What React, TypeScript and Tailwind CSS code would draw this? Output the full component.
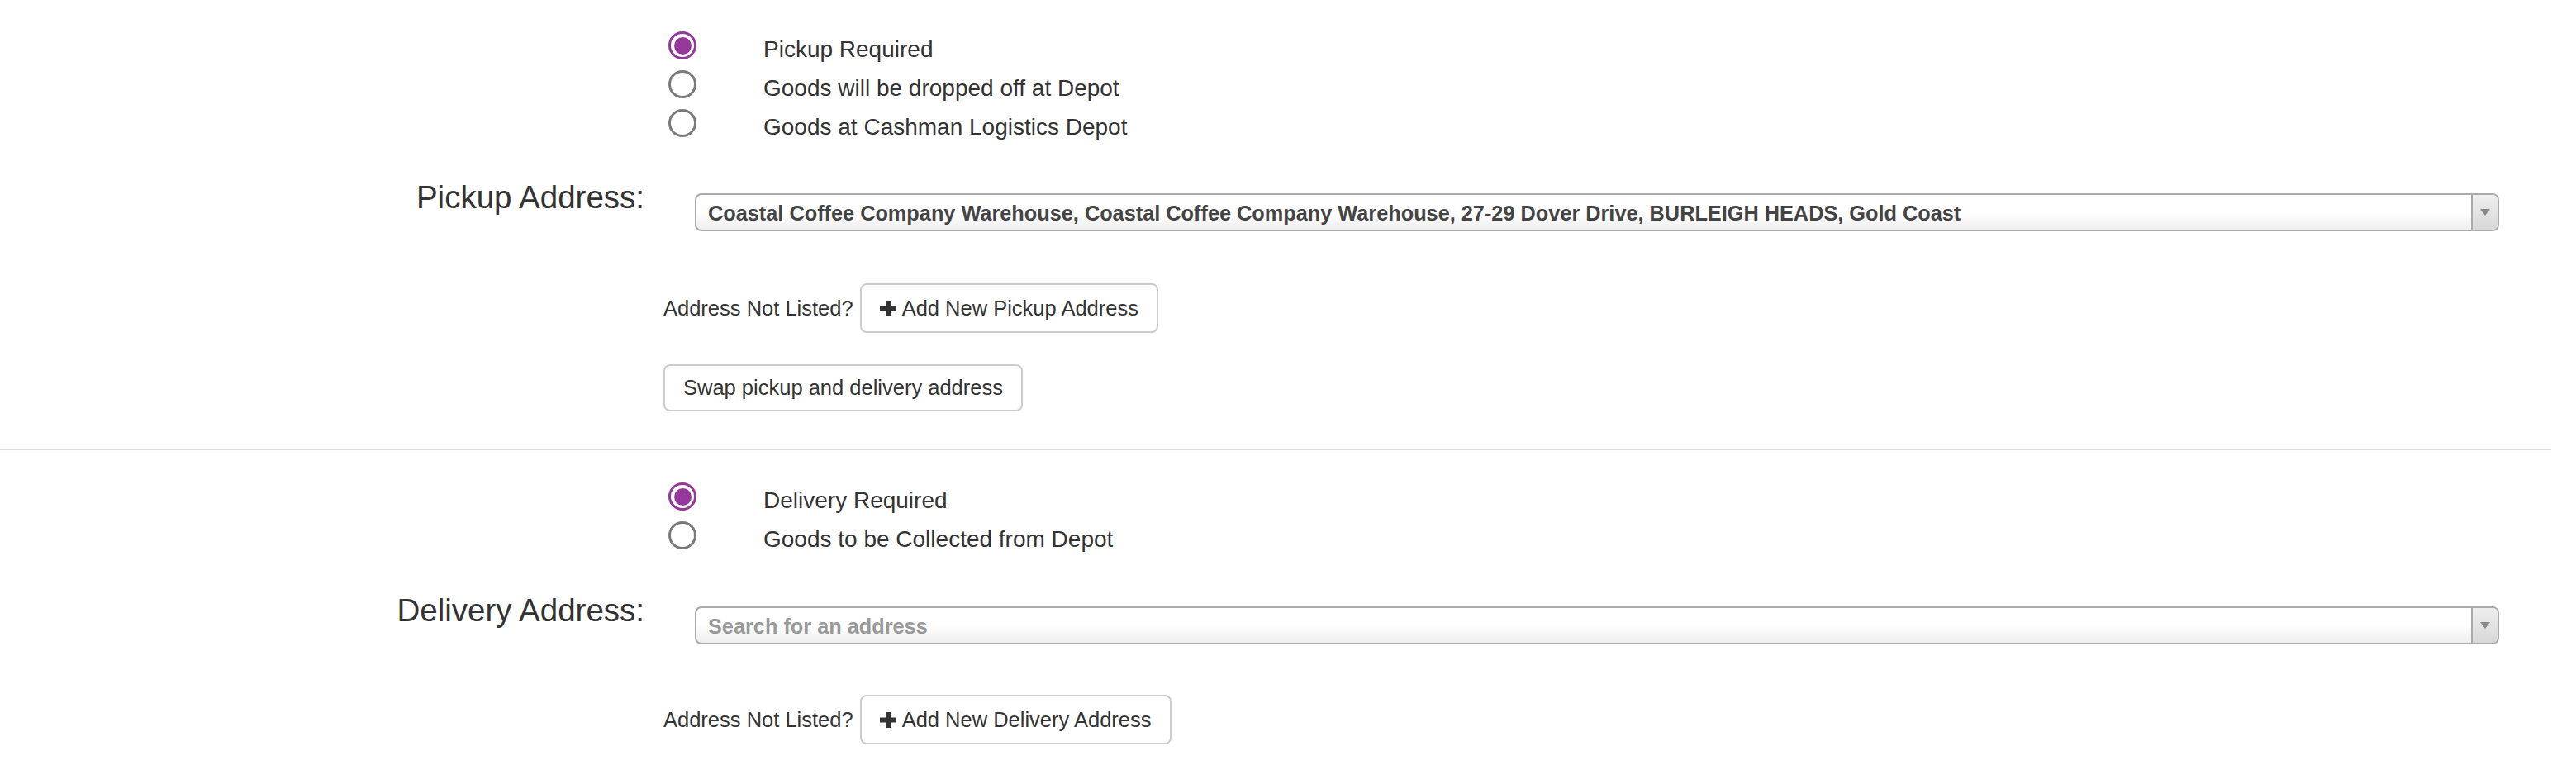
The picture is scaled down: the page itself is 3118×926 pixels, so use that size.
import React from "react";

function Radio({ checked }: { checked?: boolean }) {
  if (checked) {
    return (
      <div className="w-[34px] h-[34px] rounded-full border-[3.5px] border-[#94399a] flex items-center justify-center shrink-0 bg-white">
        <div className="w-[21px] h-[21px] rounded-full bg-[#94399a]" />
      </div>
    );
  }
  return <div className="w-[34px] h-[34px] rounded-full border-[3px] border-[#7a7a7a] shrink-0 bg-white" />;
}

function RadioRow({ label, checked }: { label: string; checked?: boolean }) {
  return (
    <div className="h-[47px] flex items-start">
      <div className="mt-[7px]">
        <Radio checked={checked} />
      </div>
      <div className="ml-[81px] mt-[13px] text-[28px] leading-[32px] text-[#333] whitespace-nowrap">{label}</div>
    </div>
  );
}

function Select({ value, placeholder }: { value?: string; placeholder?: string }) {
  return (
    <div className="mt-[16px] ml-[61px] w-[2184px] h-[46px] flex border-2 border-[#aaa] rounded-[8px] overflow-hidden bg-gradient-to-b from-white from-50% to-[#eeeeee]">
      <div
        className={
          "flex-1 flex items-center pl-[14px] pt-[3px] text-[25.3px] font-bold whitespace-nowrap " +
          (value ? "text-[#444]" : "text-[#999]")
        }
      >
        {value ?? placeholder}
      </div>
      <div className="w-[32px] border-l-2 border-[#aaa] bg-gradient-to-b from-[#eeeeee] to-[#d8d8d8] flex items-center justify-center">
        <svg width="12" height="8" viewBox="0 0 12 8">
          <polygon points="0,0 12,0 6,8" fill="#888" />
        </svg>
      </div>
    </div>
  );
}

function PlusIcon() {
  return (
    <svg width="20" height="19" viewBox="0 0 20 19" className="shrink-0">
      <rect x="0" y="6.5" width="20" height="6" fill="#333" />
      <rect x="7" y="0" width="6" height="19" fill="#333" />
    </svg>
  );
}

function Btn({ children, className }: { children: React.ReactNode; className?: string }) {
  return (
    <div
      className={
        "flex items-center border-2 border-[#cccccc] rounded-[8px] bg-white px-[22px] text-[25.5px] text-[#333] whitespace-nowrap " +
        (className ?? "")
      }
    >
      {children}
    </div>
  );
}

function LabelRow({ label, value, placeholder }: { label: string; value?: string; placeholder?: string }) {
  return (
    <div className="flex items-start">
      <div className="w-[780px] text-right text-[38.5px] leading-[41px] text-[#333] whitespace-nowrap">{label}</div>
      <Select value={value} placeholder={placeholder} />
    </div>
  );
}

function AddRow({ text }: { text: string }) {
  return (
    <div className="pl-[803px] flex items-center h-[60px]">
      <span className="text-[25.5px] text-[#333] whitespace-nowrap">Address Not Listed?</span>
      <Btn className="ml-[8px] h-[60px] gap-[7px]">
        <PlusIcon />
        <span>{text}</span>
      </Btn>
    </div>
  );
}

export default function App() {
  return (
    <div
      className="w-[3118px] h-[926px] bg-white overflow-hidden"
      style={{ fontFamily: '"Liberation Sans", Arial, Helvetica, sans-serif' }}
    >
      {/* Pickup section */}
      <div className="pt-[31px] pl-[809px]">
        <RadioRow label="Pickup Required" checked />
        <RadioRow label="Goods will be dropped off at Depot" />
        <RadioRow label="Goods at Cashman Logistics Depot" />
      </div>
      <div className="mt-[46px]">
        <LabelRow
          label="Pickup Address:"
          value="Coastal Coffee Company Warehouse, Coastal Coffee Company Warehouse, 27-29 Dover Drive, BURLEIGH HEADS, Gold Coast"
        />
      </div>
      <div className="mt-[63px]">
        <AddRow text="Add New Pickup Address" />
      </div>
      <div className="mt-[38px] pl-[803px] flex">
        <Btn className="h-[57px]">Swap pickup and delivery address</Btn>
      </div>
      <div className="mt-[45px] w-[3088px] h-[2px] bg-[#dddddd]" />

      {/* Delivery section */}
      <div className="pt-[32px] pl-[809px]">
        <RadioRow label="Delivery Required" checked />
        <RadioRow label="Goods to be Collected from Depot" />
      </div>
      <div className="mt-[47px]">
        <LabelRow label="Delivery Address:" placeholder="Search for an address" />
      </div>
      <div className="mt-[61px]">
        <AddRow text="Add New Delivery Address" />
      </div>
    </div>
  );
}
